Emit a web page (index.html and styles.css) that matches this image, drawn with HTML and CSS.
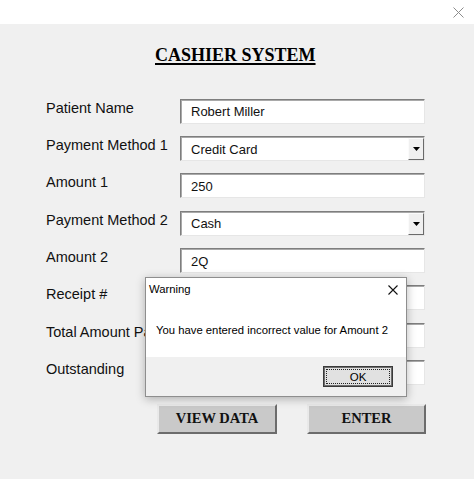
FILE: index.html
```html
<!DOCTYPE html>
<html>
<head>
<meta charset="utf-8">
<link rel="stylesheet" href="styles.css">
</head>
<body>
<div class="window">
  <div class="topbar">
    <svg class="win-close" width="11" height="11" viewBox="0 0 11 11"><path d="M0.5 0.5L10.5 10.5M10.5 0.5L0.5 10.5" stroke="#8c8c8c" stroke-width="1"/></svg>
  </div>
  <main class="panel">
    <h1 class="title">CASHIER SYSTEM</h1>
    <div class="form">
      <label class="lbl">Patient Name</label>
      <div class="field"><span class="val">Robert Miller</span></div>

      <label class="lbl">Payment Method 1</label>
      <div class="field combo"><span class="val">Credit Card</span><span class="drop"><svg width="7" height="4" viewBox="0 0 7 4"><path d="M0 0H7L3.5 4Z" fill="#000"/></svg></span></div>

      <label class="lbl">Amount 1</label>
      <div class="field"><span class="val">250</span></div>

      <label class="lbl">Payment Method 2</label>
      <div class="field combo"><span class="val">Cash</span><span class="drop"><svg width="7" height="4" viewBox="0 0 7 4"><path d="M0 0H7L3.5 4Z" fill="#000"/></svg></span></div>

      <label class="lbl">Amount 2</label>
      <div class="field"><span class="val">2Q</span></div>

      <label class="lbl">Receipt #</label>
      <div class="field"><span class="val"></span></div>

      <label class="lbl">Total Amount Paid</label>
      <div class="field"><span class="val"></span></div>

      <label class="lbl">Outstanding</label>
      <div class="field"><span class="val"></span></div>
    </div>
    <div class="actions">
      <button class="btn">VIEW DATA</button>
      <button class="btn btn-enter">ENTER</button>
    </div>
  </main>

  <div class="dialog">
    <div class="dlg-head">
      <span class="dlg-title">Warning</span>
      <svg class="dlg-x" width="10" height="10" viewBox="0 0 10 10"><path d="M0.5 0.5L9.5 9.5M9.5 0.5L0.5 9.5" stroke="#111" stroke-width="1.1"/></svg>
    </div>
    <div class="dlg-msg">You have entered incorrect value for Amount 2</div>
    <div class="dlg-foot">
      <button class="ok"><span class="ok-focus">OK</span></button>
    </div>
  </div>
</div>
</body>
</html>
```

FILE: styles.css
```css
html, body {
  margin: 0;
  padding: 0;
}
body {
  background: #f0f0f0;
  font-family: "Liberation Sans", Arial, sans-serif;
  color: #111;
  width: 474px;
  height: 479px;
  overflow: hidden;
}
.window {
  position: relative;
  width: 474px;
  height: 479px;
}
.topbar {
  height: 24px;
  background: #fff;
  display: flex;
  justify-content: flex-end;
  align-items: flex-start;
}
.win-close {
  margin: 7px 10px 0 0;
}
.panel {
  padding-top: 21px;
}
.title {
  margin: 0;
  padding-left: 155px;
  font-family: "Liberation Serif", "Times New Roman", serif;
  font-weight: bold;
  font-size: 18px;
  line-height: 21px;
  color: #000;
  text-decoration: underline;
  text-decoration-thickness: 2px;
  text-underline-offset: 2px;
}
.form {
  display: grid;
  grid-template-columns: 134px 245px;
  grid-auto-rows: 25px;
  row-gap: 12.333px;
  margin: 32.7px 0 0 46px;
}
.lbl {
  font-size: 14.5px;
  line-height: 17px;
  padding-top: 1px;
  white-space: nowrap;
  color: #111;
}
.field {
  box-sizing: border-box;
  background: #fff;
  border: 1px solid;
  border-color: #7e7e7e #e6e6e6 #e6e6e6 #7e7e7e;
  box-shadow: inset 1px 1px 0 #a9a9a9;
  display: flex;
  align-items: center;
  padding-left: 10px;
  font-size: 13px;
  line-height: 15px;
}
.field .val {
  flex: 1;
  padding-top: 1px;
}
.combo {
  align-items: stretch;
}
.combo .val {
  display: flex;
  align-items: center;
}
.drop {
  box-sizing: border-box;
  width: 16px;
  margin: 1px 0 0 0;
  background: #f0f0f0;
  border-left: 1px solid #fbfbfb;
  border-top: 1px solid #fbfbfb;
  border-right: 1px solid #6a6a6a;
  border-bottom: 1px solid #6a6a6a;
  display: flex;
  align-items: center;
  justify-content: center;
}
.actions {
  display: flex;
  gap: 30px;
  padding-left: 157px;
  margin-top: 18.67px;
}
.btn {
  box-sizing: border-box;
  width: 120px;
  height: 30px;
  padding: 0;
  background: #c9c9c9;
  border: 2px solid;
  border-color: #e9e9e9 #6c6c6c #6c6c6c #e9e9e9;
  font-family: "Liberation Serif", "Times New Roman", serif;
  font-weight: bold;
  font-size: 14.5px;
  color: #111;
}
.btn-enter {
  width: 119px;
}
.dialog {
  position: absolute;
  left: 145px;
  top: 277px;
  width: 262px;
  height: 120px;
  box-sizing: border-box;
  border: 1px solid #8e8e8e;
  background: #fff;
  box-shadow: 0 2px 9px rgba(0, 0, 0, 0.28);
  display: flex;
  flex-direction: column;
  font-size: 11.3px;
  line-height: 14px;
  color: #000;
}
.dlg-head {
  height: 24px;
  box-sizing: border-box;
  padding: 4px 8px 0 3px;
  display: flex;
  justify-content: space-between;
  align-items: flex-start;
}
.dlg-x {
  margin-top: 3px;
}
.dlg-msg {
  flex: 1;
  padding: 21px 0 0 10px;
}
.dlg-foot {
  height: 39px;
  box-sizing: border-box;
  background: #f0f0f0;
  display: flex;
  justify-content: flex-end;
  padding: 9px 13px 0 0;
}
.ok {
  box-sizing: border-box;
  width: 70px;
  height: 21px;
  padding: 2px;
  background: #e1e1e1;
  border: 1px solid #3a3a3a;
  box-shadow: inset 0 0 0 1px #6e6e6e;
  font-family: "Liberation Sans", Arial, sans-serif;
  font-size: 11.5px;
  color: #000;
  display: flex;
}
.ok-focus {
  flex: 1;
  border: 1px dotted #222;
  display: flex;
  align-items: center;
  justify-content: center;
}
```
